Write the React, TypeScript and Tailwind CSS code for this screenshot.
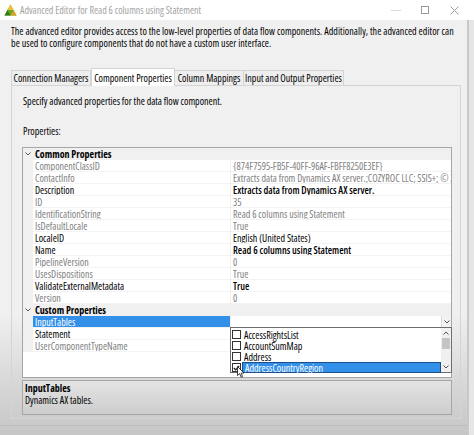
import React from "react";

type Row =
  | { cat: true; n: string }
  | { cat?: false; n: string; v?: string; ro?: boolean; bold?: boolean; sel?: boolean };

const rows: Row[] = [
  { cat: true, n: "Common Properties" },
  { n: "ComponentClassID", v: "{874F7595-FB5F-40FF-96AF-FBFF8250E3EF}", ro: true },
  { n: "ContactInfo", v: "Extracts data from Dynamics AX server.;COZYROC LLC; SSIS+; © 2006-2024 COZYROC LLC", ro: true },
  { n: "Description", v: "Extracts data from Dynamics AX server.", bold: true },
  { n: "ID", v: "35", ro: true },
  { n: "IdentificationString", v: "Read 6 columns using Statement", ro: true },
  { n: "IsDefaultLocale", v: "True", ro: true },
  { n: "LocaleID", v: "English (United States)" },
  { n: "Name", v: "Read 6 columns using Statement", bold: true },
  { n: "PipelineVersion", v: "0", ro: true },
  { n: "UsesDispositions", v: "True", ro: true },
  { n: "ValidateExternalMetadata", v: "True", bold: true },
  { n: "Version", v: "0", ro: true },
  { cat: true, n: "Custom Properties" },
  { n: "InputTables", sel: true },
  { n: "Statement", v: "" },
  { n: "UserComponentTypeName", v: "", ro: true },
];

const listItems = ["AccessRightsList", "AccountSumMap", "Address", "AddressCountryRegion"];

function Chevron({ up = false, className = "" }: { up?: boolean; className?: string }) {
  return (
    <svg width="6" height="4" viewBox="0 0 6 4" className={className}>
      <path d={up ? "M0.5 3.5 L3 1 L5.5 3.5" : "M0.5 0.5 L3 3 L5.5 0.5"} fill="none" stroke="#555" strokeWidth="1" />
    </svg>
  );
}

function CheckBox({ checked = false }: { checked?: boolean }) {
  return (
    <div className="w-[9px] h-[9px] border border-[#333] bg-white flex items-center justify-center shrink-0">
      {checked && (
        <svg width="7" height="6" viewBox="0 0 7 6">
          <path d="M0.8 3 L2.7 4.8 L6.2 0.8" fill="none" stroke="#222" strokeWidth="1.2" />
        </svg>
      )}
    </div>
  );
}

export default function App() {
  return (
    <div className="w-[474px] h-[435px] overflow-hidden relative flex flex-col font-['Open_Sans',sans-serif] [font-stretch:87.5%] text-[10px] leading-[12px] text-black bg-linear-to-b from-[#f0f0f0] from-[72%] to-[#c6c6c6]">
      {/* Title bar */}
      <div className="h-[20px] bg-white flex items-center shrink-0">
        <svg width="13" height="12" viewBox="0 0 13 12" className="ml-[4px]">
          <path d="M6.5 0.5 L12.5 11.5 L0.5 11.5 Z" fill="#6aa82a" />
          <path d="M6.5 0.5 L9.5 6 L3.5 6 Z" fill="#f2c230" />
          <path d="M3.5 6 L6.5 11.5 L0.5 11.5 Z" fill="#2f7d1e" />
          <path d="M9.5 6 L12.5 11.5 L6.5 11.5 Z" fill="#e0a21c" />
        </svg>
        <span className="ml-[3px] text-[#a3a3a3]">Advanced Editor for Read 6 columns using Statement</span>
        <div className="ml-auto flex items-center h-full">
          <div className="w-[10px] h-px bg-[#dcdcdc] mr-[20px]" />
          <div className="w-[8px] h-[8px] border border-[#9a9a9a] mr-[21px]" />
          <svg width="9" height="9" viewBox="0 0 9 9" className="mr-[15px]">
            <path d="M0.5 0.5 L8.5 8.5 M8.5 0.5 L0.5 8.5" stroke="#9a9a9a" strokeWidth="1" />
          </svg>
        </div>
      </div>

      <div className="flex flex-1">
        <div className="w-[467px] flex flex-col">
          {/* Description */}
          <div className="pt-[5px] pl-[11px] whitespace-nowrap tracking-[0.05px]">
            The advanced editor provides access to the low-level properties of data flow components. Additionally, the advanced editor can
            <br />
            be used to configure components that do not have a custom user interface.
          </div>

          {/* Tabs */}
          <div className="mt-[19px] h-[17px] pl-[11px] flex items-end relative z-10 whitespace-nowrap">
            <div className="w-[80px] h-[15px] border border-b-0 border-[#d4d4d4] bg-[#eeeeee] flex items-center justify-center">Connection Managers</div>
            <div className="w-[84px] h-[18px] -mb-px border border-b-0 border-[#d4d4d4] bg-white flex items-center justify-center">Component Properties</div>
            <div className="w-[69px] h-[15px] border border-b-0 border-l-0 border-[#d4d4d4] bg-[#eeeeee] flex items-center justify-center">Column Mappings</div>
            <div className="w-[100px] h-[15px] border border-b-0 border-l-0 border-[#d4d4d4] bg-[#eeeeee] flex items-center justify-center">Input and Output Properties</div>
          </div>

          {/* Tab panel */}
          <div className="ml-[11px] w-[450px] border border-[#d4d4d4] pb-[3px]">
            <div className="pt-[9px] pl-[11px]">Specify advanced properties for the data flow component.</div>
            <div className="mt-[18px] pl-[11px]">Properties:</div>

            {/* Property grid */}
            <div className="mt-[10px] ml-[10px] w-[430px] h-[231px] border border-[#a6a6a6] bg-white relative">
              {rows.map((r, i) =>
                r.cat ? (
                  <div key={i} className="h-[12px] flex items-center bg-[#f0f0f0]">
                    <div className="w-[10px] flex justify-center">
                      <Chevron />
                    </div>
                    <span className="ml-[2px] font-bold">{r.n}</span>
                  </div>
                ) : (
                  <div key={i} className="h-[12px] flex">
                    <div className="w-[10px] bg-[#f0f0f0] shrink-0" />
                    <div
                      className={`w-[197px] shrink-0 pl-[2px] whitespace-nowrap overflow-hidden border-b border-[#f3f3f3] ${
                        r.sel ? "bg-[#3390e8] text-white" : r.ro ? "text-[#808080]" : "text-black"
                      }`}
                    >
                      {r.n}
                    </div>
                    <div className="w-px bg-[#f0f0f0] shrink-0" />
                    {r.sel ? (
                      <div className="flex-1 flex items-stretch">
                        <div className="flex-1" />
                        <div className="w-[10px] bg-[#f2f2f2] border-l border-[#dadada] flex items-center justify-center">
                          <Chevron />
                        </div>
                      </div>
                    ) : (
                      <div
                        className={`flex-1 pl-[2px] whitespace-nowrap overflow-hidden border-b border-[#f3f3f3] ${
                          r.bold ? "font-semibold text-black" : r.ro ? "text-[#808080]" : "text-black"
                        }`}
                      >
                        {r.v}
                      </div>
                    )}
                  </div>
                )
              )}

              {/* Dropdown list */}
              <div className="absolute left-[207px] top-[179px] w-[222px] h-[46px] border border-[#6e6e6e] bg-white flex">
                <div className="flex-1 flex flex-col pt-[1px]">
                  {listItems.map((it, i) => {
                    const sel = i === listItems.length - 1;
                    return (
                      <div key={it} className="h-[11px] flex items-center pl-[1px]">
                        <CheckBox checked={sel} />
                        <div
                          className={`ml-[1px] flex-1 h-[11px] pl-[2px] flex items-center ${
                            sel ? "bg-[#3390e8] text-white border border-[#1f4f8a]" : ""
                          }`}
                        >
                          {it}
                        </div>
                      </div>
                    );
                  })}
                </div>
                <div className="w-[10px] bg-[#f0f0f0] flex flex-col items-center">
                  <div className="h-[10px] flex items-center">
                    <Chevron up />
                  </div>
                  <div className="w-[8px] h-[11px] bg-[#c4c4c4]" />
                  <div className="flex-1" />
                  <div className="h-[10px] flex items-center">
                    <Chevron />
                  </div>
                </div>
                {/* mouse cursor */}
                <svg width="8" height="12" viewBox="0 0 8 12" className="absolute left-[6px] top-[38px]">
                  <path d="M0.5 0.5 L0.5 9.5 L2.6 7.6 L4.2 11.2 L5.6 10.6 L4.1 7.1 L7 7 Z" fill="#fff" stroke="#111" strokeWidth="0.8" />
                </svg>
              </div>
            </div>

            {/* Description pane */}
            <div className="mt-[2px] ml-[10px] w-[430px] h-[35px] border border-[#a6a6a6] bg-linear-to-b from-[#e4e4e4] to-[#cdcdcd] pt-[1px] pl-[2px]">
              <div className="font-bold">InputTables</div>
              <div>Dynamics AX tables.</div>
            </div>
          </div>
          <div className="mt-[6px] border-t border-[#bcbcbc]" />
        </div>
        <div className="flex-1 border-l-2 border-[#c8c8c8] bg-[#e6e6e6]" />
      </div>
    </div>
  );
}
